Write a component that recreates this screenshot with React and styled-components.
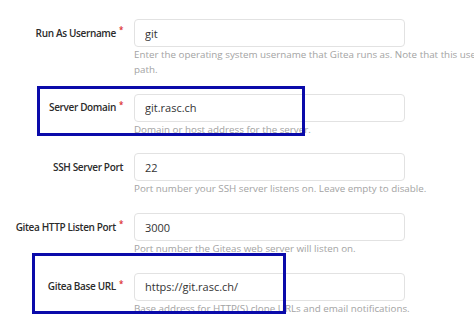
import React from 'react';
import styled, { createGlobalStyle } from 'styled-components';

const GlobalStyle = createGlobalStyle`
  html, body {
    margin: 0;
    padding: 0;
    background: #fff;
    overflow: hidden;
  }
  body {
    font-family: "Open Sans", "Noto Sans", sans-serif;
    color: #333;
  }
`;

const Page = styled.div`
  position: relative;
  width: 474px;
  height: 327px;
  overflow: hidden;
  padding-top: 19px;
  box-sizing: border-box;
`;

const Form = styled.div`
  display: flex;
  flex-direction: column;
  gap: 16.7px;
`;

const Field = styled.div`
  display: grid;
  grid-template-columns: 123px 271px;
  column-gap: 11px;
  align-items: start;
`;

const Label = styled.label`
  height: 27px;
  display: flex;
  align-items: center;
  justify-content: flex-end;
  font-size: 10px;
  font-weight: 600;
  letter-spacing: -0.35px;
  color: #2b2b2b;
  white-space: nowrap;
`;

const Required = styled.span`
  color: #db2828;
  font-size: 8px;
  margin-left: 3px;
  position: relative;
  top: -3px;
`;

const Control = styled.div`
  display: flex;
  flex-direction: column;
`;

const Input = styled.input`
  box-sizing: border-box;
  width: 271px;
  height: 28px;
  border: 1px solid #e2e2e2;
  border-radius: 4px;
  padding: 0 10px;
  font-family: "Open Sans", "Noto Sans", sans-serif;
  font-size: 11px;
  color: #333;
  background: #fff;
  outline: none;
`;

const Help = styled.div`
  width: 548px;
  font-size: 9.8px;
  line-height: 15px;
  color: #a3a3a3;
`;

const Highlight = styled.div`
  position: absolute;
  border: 3px solid #0a0aaa;
  box-sizing: border-box;
  pointer-events: none;
  left: ${p => p.x}px;
  top: ${p => p.y}px;
  width: ${p => p.w}px;
  height: ${p => p.h}px;
`;

const fields = [
  {
    label: 'Run As Username',
    required: true,
    value: 'git',
    help: 'Enter the operating system username that Gitea runs as. Note that this user must have access to the repository root path.'
  },
  {
    label: 'Server Domain',
    required: true,
    value: 'git.rasc.ch',
    help: 'Domain or host address for the server.'
  },
  {
    label: 'SSH Server Port',
    required: false,
    value: '22',
    help: 'Port number your SSH server listens on. Leave empty to disable.'
  },
  {
    label: 'Gitea HTTP Listen Port',
    required: true,
    value: '3000',
    help: 'Port number the Giteas web server will listen on.'
  },
  {
    label: 'Gitea Base URL',
    required: true,
    value: 'https://git.rasc.ch/',
    help: 'Base address for HTTP(S) clone URLs and email notifications.'
  }
];

const App = () => (
  <>
    <GlobalStyle />
    <Page>
      <Form>
        {fields.map((f) => (
          <Field key={f.label}>
            <Label>
              {f.label}
              {f.required && <Required>*</Required>}
            </Label>
            <Control>
              <Input defaultValue={f.value} readOnly />
              <Help>{f.help}</Help>
            </Control>
          </Field>
        ))}
      </Form>

      {/* annotation boxes drawn over the screenshot */}
      <Highlight x={37} y={86} w={268} h={50} />
      <Highlight x={32} y={253} w={254} h={61} />
    </Page>
  </>
);

export default App;
